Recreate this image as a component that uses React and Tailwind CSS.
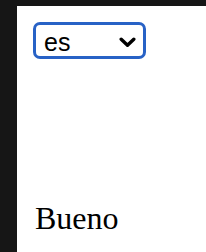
export default function App() {
  return (
    <div className="h-[252px] w-[206px] bg-[#161616] pl-[17px] pt-[6px]">
      <div className="h-full bg-white px-[16px] pt-[16px]">
        <div className="relative flex h-[37px] w-[113px] items-center rounded-[7px] border-[3px] border-[#2862c6] bg-white pl-[8px] pt-[4px] font-['Liberation_Sans',Arial,sans-serif] text-[25px] leading-none text-black">
          <span>es</span>
          <svg
            className="absolute right-[7px] top-[12px]"
            width="17"
            height="11"
            viewBox="0 0 17 11"
            fill="none"
          >
            <path
              d="M2.2 2.2 L8.5 8.3 L14.8 2.2"
              stroke="#000"
              strokeWidth="3.4"
              strokeLinecap="round"
              strokeLinejoin="round"
            />
          </svg>
        </div>
        <p className="ml-[2px] mt-[143px] font-['Liberation_Serif','Times_New_Roman',serif] text-[32px] leading-none text-black">
          Bueno
        </p>
      </div>
    </div>
  );
}
